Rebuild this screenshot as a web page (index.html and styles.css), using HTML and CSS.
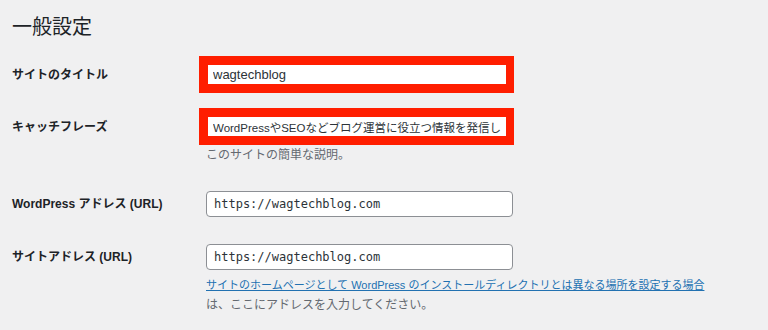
FILE: index.html
```html
<!DOCTYPE html>
<html lang="ja">
<head>
    <meta charset="UTF-8">
    <meta name="viewport" content="width=device-width, initial-scale=1.0">
    <title>一般設定</title>
    <link rel="stylesheet" href="styles.css">
</head>
<body>
    <div class="wrap">
        <h1>一般設定</h1>

        <div class="form-row">
            <label class="row-label tall" for="blogname">サイトのタイトル</label>
            <div class="field">
                <div class="marked">
                    <input type="text" id="blogname" class="plain-input" value="wagtechblog">
                </div>
            </div>
        </div>

        <div class="form-row">
            <label class="row-label tall" for="blogdescription">キャッチフレーズ</label>
            <div class="field">
                <div class="marked">
                    <input type="text" id="blogdescription" class="plain-input small" value="WordPressやSEOなどブログ運営に役立つ情報を発信しています">
                </div>
                <p class="description">このサイトの簡単な説明。</p>
            </div>
        </div>

        <div class="form-row url-row">
            <label class="row-label" for="siteurl">WordPress アドレス (URL)</label>
            <div class="field">
                <input type="url" id="siteurl" class="url-input" value="https://wagtechblog.com">
            </div>
        </div>

        <div class="form-row url-row home-row">
            <label class="row-label" for="home">サイトアドレス (URL)</label>
            <div class="field">
                <input type="url" id="home" class="url-input" value="https://wagtechblog.com">
                <p class="description home-desc"><a href="#">サイトのホームページとして WordPress のインストールディレクトリとは異なる場所を設定する場合</a><br>は、ここにアドレスを入力してください。</p>
            </div>
        </div>
    </div>
</body>
</html>
```

FILE: styles.css
```css
body {
    margin: 0;
    padding: 0;
    background-color: #f0f0f1;
    color: #1d2327;
    font-family: "Liberation Sans", "Noto Sans CJK JP", sans-serif;
}
.wrap {
    padding-left: 12px;
}
h1 {
    margin: 0;
    padding-top: 14px;
    font-size: 20px;
    line-height: 26px;
    font-weight: 400;
    color: #1d2327;
}
.form-row {
    display: flex;
    align-items: flex-start;
    margin-top: 15px;
}
.form-row:first-of-type {
    margin-top: 16px;
}
.row-label {
    width: 194px;
    flex-shrink: 0;
    font-size: 12px;
    font-weight: bold;
    line-height: 26px;
    color: #1d2327;
}
.row-label.tall {
    padding-top: 2px;
    line-height: 35px;
}
.field {
    display: flex;
    flex-direction: column;
}
.marked {
    margin-left: -7px;
    width: 298px;
    border: 9px solid #ff1e00;
    border-right-width: 8px;
    background: #fff;
}
.plain-input {
    display: block;
    box-sizing: border-box;
    width: 298px;
    height: 19px;
    margin: 0;
    padding: 0 5px;
    border: none;
    outline: none;
    background: #fff;
    color: #2c3338;
    font-family: "Liberation Sans", "Noto Sans CJK JP", sans-serif;
    font-size: 13px;
}
.plain-input.small {
    font-size: 11.5px;
}
.description {
    margin: 0;
    font-size: 12px;
    line-height: 20px;
    color: #646970;
}
.url-row {
    margin-top: 26px;
}
.home-row {
    margin-top: 27px;
}
.url-input {
    box-sizing: border-box;
    width: 307px;
    height: 26px;
    margin: 0;
    padding: 0 7px;
    border: 1px solid #8c8f94;
    border-radius: 4px;
    background: #fff;
    color: #2c3338;
    font-family: "DejaVu Sans Mono", monospace;
    font-size: 12px;
}
.home-desc {
    margin-top: 5px;
}
.home-desc a {
    color: #2271b1;
    font-size: 11px;
    text-decoration: underline;
}
```
